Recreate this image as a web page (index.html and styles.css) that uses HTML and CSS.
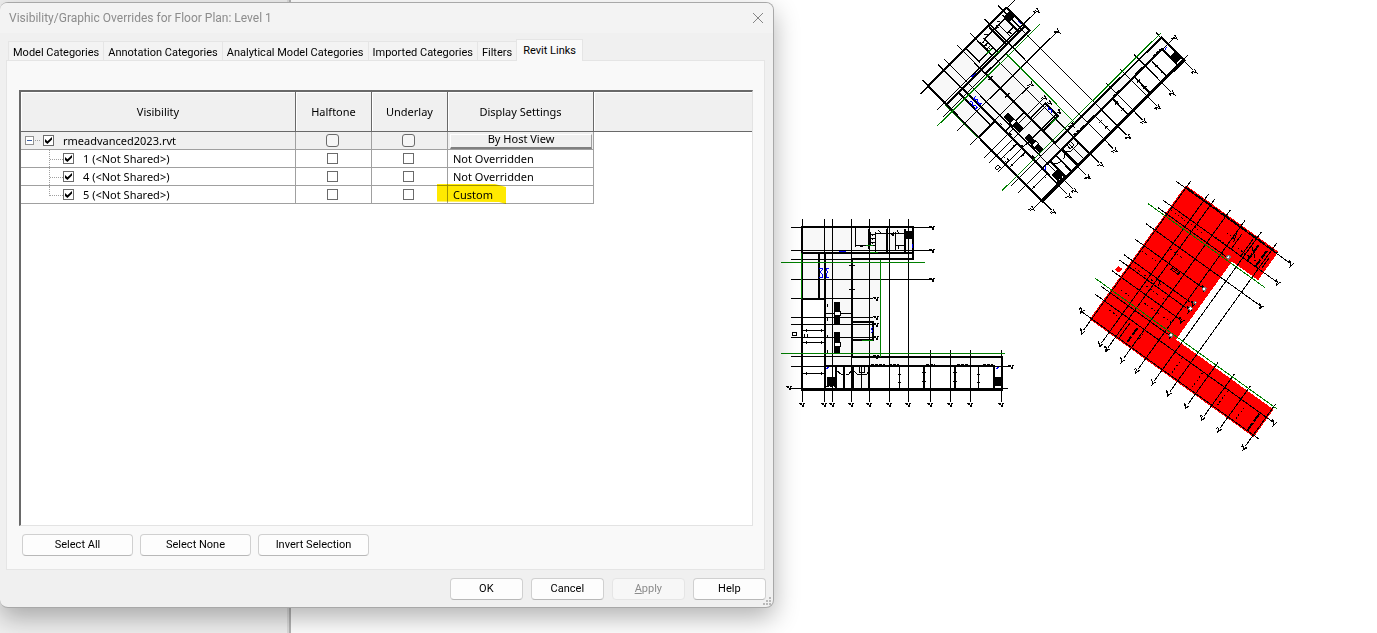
FILE: index.html
```
<!DOCTYPE html>
<html lang="en">
<head>
  <meta charset="UTF-8">
  <title>Visibility/Graphic Overrides</title>
  <link rel="stylesheet" href="styles.css">
</head>
<body>
  <div class="workspace">
    <div class="palette"></div>
    <div class="view">
      <svg class="drawing" width="597" height="460" viewBox="780 0 597 460" shape-rendering="crispEdges">
        <defs>
          <path id="tag" d="M-1 0h1v2M1 0l2 4 1-4h1"/>
          <!-- grid lines -->
          <g id="grid" fill="none" stroke="#000">
            <path d="M802.500 219v183M824.500 219v183M832.500 219v183M851.500 219v183M869.500 219v183M889.500 219v183M908.500 219v183M930.500 350v52M950.500 350v52M970.500 350v52M1001.500 350v52"/>
            <path d="M791 227.500h142M791 250.500h142M791 259.500h85M791 279.500h142M791 298.500h82M791 317.500h82M791 324.500h82M791 337.500h82M791 356.500h82M791 366.500h219M791 388.500h217"/>
          </g>
          <g id="greens" fill="none" stroke="#008000">
            <path d="M781 262h144"/>
            <path d="M781 353.500h224"/>
          </g>
          <g id="tags" fill="none" stroke="#000">
            <use href="#tag" x="800" y="403"/><use href="#tag" x="822" y="403"/><use href="#tag" x="830" y="403"/>
            <use href="#tag" x="849" y="403"/><use href="#tag" x="867" y="403"/><use href="#tag" x="887" y="403"/>
            <use href="#tag" x="906" y="403"/><use href="#tag" x="928" y="403"/><use href="#tag" x="948" y="403"/>
            <use href="#tag" x="968" y="403"/><use href="#tag" x="999" y="403"/>
            <use href="#tag" x="930" y="226"/><use href="#tag" x="930" y="249"/><use href="#tag" x="930" y="278"/>
            <use href="#tag" x="874" y="297"/><use href="#tag" x="874" y="316"/><use href="#tag" x="874" y="323"/>
            <use href="#tag" x="874" y="336"/><use href="#tag" x="874" y="355"/><use href="#tag" x="1009" y="365"/>
            <use href="#tag" x="787" y="386"/>
          </g>
          <!-- doors and partitions -->
          <g id="detail" fill="none" stroke="#000">
            <path d="M855.500 227v20M868.500 229v20M875.500 232v20M887.500 227v24M895.500 232v19M904.500 229v22"/>
            <path d="M855 245.500h20M868 234.500h7M868 238.500h7M868 242.500h7M876 233.500h28M895 245.500h9M878 230l4 4 4-1M890 233l4 3M897 230l2 4 4-1"/>
            <path d="M803 330.500h21M803 342.500h21M803 373.500h21M826 313.500h25M849 265.500h6M849 289.500h6"/>
            <path d="M806 329v3M821 329v3M806 341v3M821 341v3M806 372v3M821 372v3M804 334v3h3v-3"/>
            <path d="M835.500 366v23M837 371l4 3h3M844.500 367v22M846 374h3l2-3M852.500 367v22M854 371l3 3h10l2-3M859 367v5h5v-5M861.500 367v22M899.500 367v22M898 374h3M898 382h3M978.500 367v22M977 374h3M977 382h3"/>
            <path d="M871 364.500h14M889 364.500h10M926 364.500h9M957 364.500h12M983 364.500h10M826 386.500h9M827 304v3M827 318v4M827 335v4M827 350v4" stroke-dasharray="3 1"/>
            <path d="M860 246h3M870 232v14M872 234v2M872 238v2M872 242v2M880 232v2M893 232v3M898 246v3M922 372h4M922 381h4M953 372h4M953 381h4"/>
          </g>
          <g id="walls" fill="none" stroke="#000" stroke-width="2">
            <path d="M801 227h113M802 226v164M913 226v34M852 259h62M819 253v46M825 253v137M801 299h24M852 357h151M1002 357v33M824 366h171"/>
            <path d="M802 253h111M836 367v22M844 367v22M853 367v22M869 367v22M924 367v22M955 367v22M994 366v23M887 229v23M905 229v23"/>
            <path d="M852 322h21v18h-21zM852 259v98"/>
            <path d="M801 389h202" stroke-width="3"/>
            <path d="M834 302h6v9h-6zM834 315h6v9h-6zM834 332h6v10h-6zM834 346h6v8h-6zM904 231h10v8h-10zM827 377h8v9h-8zM995 377h7v9h-7z" fill="#000" stroke="none"/>
            <path d="M834 311h6v4h-6zM834 342h6v4h-6z" fill="#fff" stroke-width="1"/>
          </g>
          <g id="marks" fill="none" stroke="#0000ff">
            <path d="M819 268h3v2l-2 2 2 2v3h-3M829 268h-3v2l2 2-2 2v3h3M839 251.500h7M873 327l-2 2 2 2-2 2M826 369l3-2M996 369l3-2M912 244v4"/>
          </g>
          <g id="greenwalls" fill="none" stroke="#008000">
            <path d="M801 253v46M880.500 260v97M866 245.500h7M870 252.500h8M862 340.500h11"/>
          </g>
          <g id="plan">
            <path d="M802 227h111v32h-33v98h122v9H825v-67h-23z" fill="#f8f8f8"/>
            <path d="M855 367h14v22h-14z" fill="#f8f8f8"/>
            <use href="#grid"/>
            <use href="#detail"/>
            <use href="#walls"/>
            <use href="#greens"/>
            <use href="#greenwalls"/>
            <use href="#marks"/>
            <use href="#tags"/>
            <path d="M792 332.500h4v3h-4z" fill="none" stroke="#000"/>
          </g>
        </defs>
        <use href="#plan"/>
        <use href="#plan" transform="translate(1042 201) rotate(-44.800) translate(-802 -389)"/>
        <!-- overridden link -->
        <g transform="translate(1091 319) rotate(35.700) translate(-802 -389)">
          <path d="M801 225h114v35h-32v96h120v34H801zM793 330h5v5h-5z" fill="#ff0000"/>
          <use href="#grid"/>
          <use href="#greens"/>
          <use href="#tags"/>
          <path d="M803 227h112M895 231v20M905 231v20M994 368v20M845 369v17" stroke="#000" stroke-width="2" stroke-dasharray="9 2" fill="none"/>
          <path d="M804 254h40M826 286h18M804 304h20M808 322h30M828 330h22M832 345h40M856 250h24M858 240h16M880 246h22M810 348h12M812 371h12M853 371v12M899 368v20M924 368v20M955 368v20M978 368v20" stroke="#000" stroke-dasharray="1 3 2 2" fill="none"/>
          <path d="M838 300h9v2h-9zM869 231l4 12M875 232v19M887 229v22M890 236l10 8M911 236v12M834 318l5 3M836 369v19" stroke="#000" fill="none"/>
          <path d="M876 257h3v3h-3zM875 297h3v3h-3zM876 314h2v2h-2zM875 321h3v3h-3zM875 354h3v3h-3z" fill="#fff" stroke="#777" stroke-width="1"/>
        </g>
      </svg>
    </div>
  </div>

  <form class="dialog">
    <div class="titlebar">
      <h1 class="title">Visibility/Graphic Overrides for Floor Plan: Level 1</h1>
      <button type="button" class="close" aria-label="Close">
        <svg width="12" height="12" viewBox="0 0 12 12"><path d="M1 1l10 10M11 1L1 11" stroke="#858585" fill="none"/></svg>
      </button>
    </div>
    <div class="tabs">
      <button type="button" class="tab">Model Categories</button>
      <button type="button" class="tab">Annotation Categories</button>
      <button type="button" class="tab">Analytical Model Categories</button>
      <button type="button" class="tab">Imported Categories</button>
      <button type="button" class="tab">Filters</button>
      <button type="button" class="tab active">Revit Links</button>
    </div>
    <div class="panel">
      <div class="list">
        <table class="links">
          <colgroup>
            <col class="col-name"><col class="col-check"><col class="col-check"><col class="col-display"><col>
          </colgroup>
          <thead>
            <tr><th>Visibility</th><th>Halftone</th><th>Underlay</th><th>Display Settings</th><th class="rest"></th></tr>
          </thead>
          <tbody>
            <tr class="parent">
              <td>
                <div class="node">
                  <svg class="expander" width="15" height="11" viewBox="0 0 15 11" shape-rendering="crispEdges">
                    <rect x=".5" y="1.500" width="8" height="8" rx="1" fill="#fff" stroke="#919191"/>
                    <path d="M2 5.500h5" stroke="#3d5fa0"/>
                    <path d="M10 5.500h5" stroke="#a0a0a0" stroke-dasharray="1 1"/>
                  </svg>
                  <input type="checkbox" class="tick" id="link0" checked><label for="link0">rmeadvanced2023.rvt</label>
                </div>
              </td>
              <td class="center"><input type="checkbox" class="box round" aria-label="Halftone"></td>
              <td class="center"><input type="checkbox" class="box round" aria-label="Underlay"></td>
              <td class="host"><button type="button" class="hostview">By Host View</button></td>
              <td class="rest"></td>
            </tr>
            <tr>
              <td><div class="node child"><span class="branch"></span><input type="checkbox" class="tick" id="link1" checked><label for="link1">1 (&lt;Not Shared&gt;)</label></div></td>
              <td class="center"><input type="checkbox" class="box" aria-label="Halftone 1"></td>
              <td class="center"><input type="checkbox" class="box" aria-label="Underlay 1"></td>
              <td class="setting">Not Overridden</td>
              <td class="rest"></td>
            </tr>
            <tr>
              <td><div class="node child"><span class="branch"></span><input type="checkbox" class="tick" id="link4" checked><label for="link4">4 (&lt;Not Shared&gt;)</label></div></td>
              <td class="center"><input type="checkbox" class="box" aria-label="Halftone 4"></td>
              <td class="center"><input type="checkbox" class="box" aria-label="Underlay 4"></td>
              <td class="setting">Not Overridden</td>
              <td class="rest"></td>
            </tr>
            <tr>
              <td><div class="node child last"><span class="branch"></span><input type="checkbox" class="tick" id="link5" checked><label for="link5">5 (&lt;Not Shared&gt;)</label></div></td>
              <td class="center"><input type="checkbox" class="box" aria-label="Halftone 5"></td>
              <td class="center"><input type="checkbox" class="box" aria-label="Underlay 5"></td>
              <td class="setting marked">Custom</td>
              <td class="rest"></td>
            </tr>
          </tbody>
        </table>
      </div>
      <div class="selection">
        <button type="button" class="btn wide">Select All</button>
        <button type="button" class="btn wide">Select None</button>
        <button type="button" class="btn wide">Invert Selection</button>
      </div>
    </div>
    <div class="footer">
      <button type="button" class="btn">OK</button>
      <button type="button" class="btn">Cancel</button>
      <button type="button" class="btn" disabled><u>A</u>pply</button>
      <button type="button" class="btn">Help</button>
    </div>
    <svg class="grip" width="8" height="8" viewBox="0 0 8 8"><path d="M6 0h2v2h-2zM3 3h2v2h-2zM6 3h2v2h-2zM0 6h2v2h-2zM3 6h2v2h-2zM6 6h2v2h-2z" fill="#b8b8b8"/></svg>
  </form>
</body>
</html>
```
FILE: styles.css
```
* {
  margin: 0;
  padding: 0;
  box-sizing: border-box;
}
body {
  height: 100vh;
  overflow: hidden;
  position: relative;
  font-family: "Noto Sans", sans-serif;
  font-size: 11px;
  line-height: 16px;
  color: #000;
}
button {
  font: inherit;
  color: inherit;
}
.workspace {
  display: flex;
  height: 100%;
}
.palette {
  width: 291px;
  background: #f0f0f0;
  border-right: 2px solid #b4b4b4;
  box-shadow: inset -2px 0 #dcdcdc;
}
.view {
  flex: 1;
  display: flex;
  justify-content: flex-end;
  align-items: flex-start;
  background: #fff;
}
.drawing {
  flex: none;
}

/* dialog window */
.dialog {
  position: absolute;
  left: 0;
  top: 2px;
  bottom: 25px;
  width: 56.2%;
  display: flex;
  flex-direction: column;
  background: #f0f0f0;
  border: 1px solid #a8a8a8;
  border-left: none;
  border-radius: 8px;
  box-shadow: 0 10px 26px rgba(0, 0, 0, .3);
}
.titlebar {
  display: flex;
  justify-content: space-between;
  align-items: center;
  height: 30px;
  padding: 0 9px;
  background: #f3f3f3;
  border-radius: 7px 7px 0 0;
}
.title {
  font-family: Roboto, sans-serif;
  font-size: 12px;
  font-weight: normal;
  color: #8c8c8c;
}
.close {
  display: flex;
  border: none;
  background: none;
}
.tabs {
  display: flex;
  align-items: flex-end;
  height: 27px;
  padding-left: 8px;
}
.tab {
  height: 19px;
  padding: 3px 4px 0;
  font-family: Roboto, sans-serif;
  white-space: nowrap;
  background: #f3f3f3;
  border: 1px solid #e5e5e5;
  border-width: 1px 0 0 1px;
}
.tab.active {
  height: 22px;
  margin-bottom: -1px;
  padding: 0 6px;
  background: #f9f9f9;
  border-right-width: 1px;
  z-index: 1;
}
.panel {
  flex: 1;
  display: flex;
  flex-direction: column;
  margin: 0 8px 0 6px;
  padding: 29px 11px 13px 12px;
  background: #f9f9f9;
  border: 1px solid #e5e5e5;
}
.list {
  flex: 1;
  background: #fff;
  border: 1px solid #e3e3e3;
  border-top: 2px solid #696969;
  border-left: 2px solid #696969;
}

/* table of links */
.links {
  width: 100%;
  table-layout: fixed;
  border-collapse: separate;
  border-spacing: 0;
}
.col-name { width: 275px; }
.col-check { width: 76px; }
.col-display { width: 146px; }
.links th {
  height: 40px;
  font-weight: normal;
  background: #f0f0f0;
  border-right: 1px solid #696969;
  border-bottom: 1px solid #696969;
  box-shadow: inset 1px 1px #fff;
}
.links td {
  height: 18px;
  line-height: 16px;
  border-right: 1px solid #a0a0a0;
  border-bottom: 1px solid #a0a0a0;
}
.links .parent td {
  background: #f0f0f0;
}
.links th.rest {
  border-right: none;
}
.links td.rest,
.links .parent td.rest {
  background: #fff;
  border: none;
}
.node {
  display: flex;
  align-items: center;
  height: 17px;
  padding-left: 4px;
}
.node label {
  padding-left: 9px;
}
.node.child {
  padding-left: 28px;
}
.expander {
  margin-right: 3px;
}
.branch {
  align-self: stretch;
  width: 14px;
  background: linear-gradient(to right, #a0a0a0 50%, transparent 50%) 0 9px / 2px 1px repeat-x;
  border-left: 1px dotted #a0a0a0;
}
.last .branch {
  height: 10px;
  align-self: flex-start;
}
.tick,
.box {
  appearance: none;
  width: 11px;
  height: 11px;
  background: #fff;
  border: 1px solid #6b6b6b;
}
.tick::before {
  content: "";
  display: block;
  width: 7px;
  height: 7px;
  margin: 1px;
  background: #000;
  clip-path: polygon(0 30%, 35% 60%, 100% 0, 100% 35%, 35% 100%, 0 70%);
}
.center {
  padding-right: 2px;
}
.box {
  display: block;
  margin: auto;
}
.box.round {
  width: 13px;
  height: 13px;
  border-radius: 3px;
  background: #f6f6f6;
}
.links .parent .host {
  padding: 1px 1px 0 2px;
}
.hostview {
  display: block;
  width: 100%;
  height: 15px;
  padding-bottom: 4px;
  line-height: 8px;
  background: #f0f0f0;
  border: 1px solid #fff;
  border-right-color: #a0a0a0;
  border-bottom: 2px solid #808080;
}
.setting {
  padding-left: 5px;
}
.marked {
  position: relative;
}
.marked::after {
  content: "";
  position: absolute;
  left: -11px;
  top: -2px;
  width: 69px;
  height: 20px;
  background: #ffe900;
  mix-blend-mode: multiply;
  clip-path: polygon(0 0, 84% 0, 100% 15%, 100% 100%, 90% 90%, 0 88%);
}

.selection {
  display: flex;
  gap: 7px;
  padding: 8px 0 0 3px;
}
.btn {
  width: 73px;
  height: 22px;
  font-family: Roboto, sans-serif;
  background: #fdfdfd;
  border: 1px solid #d0d0d0;
  border-bottom-color: #b8b8b8;
  border-radius: 4px;
}
.btn.wide {
  width: 111px;
}
.btn:disabled {
  color: #8b8b8b;
  background: #f7f7f7;
  border-color: #e5e5e5;
}
.footer {
  display: flex;
  justify-content: flex-end;
  gap: 8px;
  padding: 8px 7px 7px;
}
.grip {
  position: absolute;
  right: 2px;
  bottom: 2px;
}
```
